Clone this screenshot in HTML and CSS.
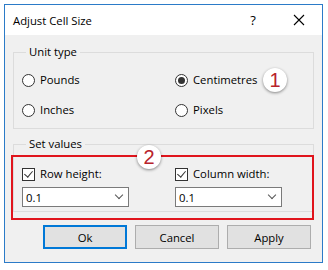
FILE: index.html
```html
<!DOCTYPE html>
<html>
	<head>
		<meta charset="utf-8">
		<title>Adjust Cell Size</title>
		<link rel="stylesheet" href="styles.css">
	</head>
	<body>
		<div class="dialog">
			<div class="titlebar">
				<span class="title">Adjust Cell Size</span>
				<span class="help">?</span>
				<span class="close">
					<svg width="12" height="12" viewBox="0 0 12 12">
						<path d="M1 1L11 11M11 1L1 11" stroke="#000" stroke-width="1.1" fill="none"/>
					</svg>
				</span>
			</div>
			<div class="content">
				<fieldset class="group">
					<legend>Unit type</legend>
					<div class="grid units">
						<label class="opt"><span class="radio"></span>Pounds</label>
						<label class="opt"><span class="radio checked"></span>Centimetres</label>
						<label class="opt"><span class="radio"></span>Inches</label>
						<label class="opt"><span class="radio"></span>Pixels</label>
					</div>
				</fieldset>
				<fieldset class="group values">
					<legend>Set values</legend>
					<div class="grid">
						<div class="field">
							<label class="opt"><span class="check"></span>Row height:</label>
							<div class="combo"><span>0.1</span><span class="chev"></span></div>
						</div>
						<div class="field">
							<label class="opt"><span class="check"></span>Column width:</label>
							<div class="combo"><span>0.1</span><span class="chev"></span></div>
						</div>
					</div>
				</fieldset>
				<div class="buttons">
					<button class="btn default">Ok</button>
					<button class="btn">Cancel</button>
					<button class="btn">Apply</button>
				</div>
			</div>
			<!-- annotations -->
			<div class="mark"></div>
			<div class="badge one">1</div>
			<div class="badge two">2</div>
		</div>
	</body>
</html>
```

FILE: styles.css
```css
* {
	margin: 0;
	padding: 0;
	box-sizing: border-box;
}

body {
	background-color: #fff;
	font-family: "Open Sans", "Noto Sans", sans-serif;
	font-size: 11.3px;
	color: #000;
}

.dialog {
	position: relative;
	margin: 4px;
	width: 319px;
	height: 259px;
	border: 1px solid #2b7bc8;
	background-color: #f0f0f0;
}

.titlebar {
	display: flex;
	align-items: center;
	height: 30px;
	padding-left: 8px;
	background-color: #fff;
}

.title {
	flex: 1;
}

.help {
	width: 46px;
	text-align: center;
	font-size: 13px;
}

.close {
	display: flex;
	justify-content: center;
	width: 46px;
}

.content {
	padding: 10px 8px 0;
}

.group {
	border: 1px solid #dcdcdc;
	padding: 6px 8px 3px;
}

.group legend {
	margin-left: 4px;
	padding: 0 3px;
	line-height: 14px;
}

.grid {
	display: grid;
	grid-template-columns: 153px 1fr;
}

.units .opt {
	height: 30px;
}

.opt {
	display: flex;
	align-items: center;
	gap: 5px;
	line-height: 14px;
}

.radio {
	width: 13px;
	height: 13px;
	border: 1px solid #333;
	border-radius: 50%;
	background-color: #fff;
	display: flex;
	align-items: center;
	justify-content: center;
}

.radio.checked::after {
	content: "";
	width: 7px;
	height: 7px;
	border-radius: 50%;
	background-color: #333;
}

.values {
	margin-top: 8px;
	padding-top: 16px;
	padding-bottom: 4px;
}

.field {
	display: flex;
	flex-direction: column;
	gap: 6px;
}

.check {
	position: relative;
	width: 13px;
	height: 13px;
	border: 1px solid #333;
	background-color: #fff;
}

.check::after {
	content: "";
	position: absolute;
	left: 3px;
	top: 0px;
	width: 4px;
	height: 7px;
	border: solid #333;
	border-width: 0 1px 1px 0;
	transform: rotate(40deg);
}

.combo {
	display: flex;
	align-items: center;
	justify-content: space-between;
	width: 107px;
	height: 20px;
	padding: 0 6px 0 3px;
	border: 1px solid #7a7a7a;
	background-color: #fff;
}

.chev {
	width: 6px;
	height: 6px;
	margin-top: -4px;
	border: solid #555;
	border-width: 0 1px 1px 0;
	transform: rotate(45deg);
}

.buttons {
	display: flex;
	justify-content: flex-end;
	gap: 8px;
	margin-top: 13px;
	padding-right: 3px;
}

.btn {
	width: 84px;
	height: 24px;
	font: inherit;
	background-color: #e1e1e1;
	border: 1px solid #adadad;
}

.btn.default {
	border: 2px solid #0078d7;
}

.mark {
	position: absolute;
	left: 6px;
	top: 150px;
	width: 303px;
	height: 65px;
	border: 2px solid #e0141c;
}

.badge {
	position: absolute;
	width: 24px;
	height: 24px;
	border-radius: 50%;
	background-color: #fff;
	box-shadow: 0 1px 3px rgba(0, 0, 0, 0.45);
	color: #b8232b;
	font-family: "Liberation Sans", sans-serif;
	font-size: 20px;
	line-height: 24px;
	text-align: center;
}

.badge.one {
	left: 258px;
	top: 63px;
}

.badge.two {
	left: 132px;
	top: 140px;
}
```
